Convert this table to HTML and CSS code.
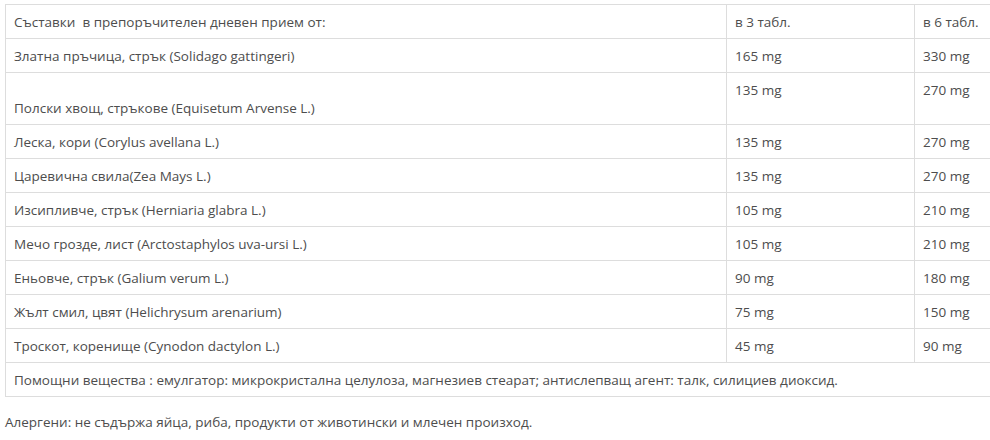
FILE: index.html
```html
<!DOCTYPE html>
<html lang="bg">
<head>
<meta charset="utf-8">
<title>Съставки</title>
<link rel="stylesheet" href="styles.css">
</head>
<body>
<div class="page">
  <table class="ingredients">
    <colgroup>
      <col class="c-name">
      <col class="c-dose">
      <col class="c-dose2">
    </colgroup>
    <tbody>
      <tr><td>Съставки&nbsp; в препоръчителен дневен прием от:</td><td>в 3 табл.</td><td>в 6 табл.</td></tr>
      <tr><td>Златна пръчица, стрък (Solidago gattingeri)</td><td>165 mg</td><td>330 mg</td></tr>
      <tr><td><span class="blank">&nbsp;</span>Полски хвощ, стръкове (Equisetum Arvense L.)</td><td>135 mg</td><td>270 mg</td></tr>
      <tr><td>Леска, кори (Corylus avellana L.)</td><td>135 mg</td><td>270 mg</td></tr>
      <tr><td>Царевична свила(Zea Mays L.)</td><td>135 mg</td><td>270 mg</td></tr>
      <tr><td>Изсипливче, стрък (Herniaria glabra L.)</td><td>105 mg</td><td>210 mg</td></tr>
      <tr><td>Мечо грозде, лист (Arctostaphylos uva-ursi L.)</td><td>105 mg</td><td>210 mg</td></tr>
      <tr><td>Еньовче, стрък (Galium verum L.)</td><td>90 mg</td><td>180 mg</td></tr>
      <tr><td>Жълт смил, цвят (Helichrysum arenarium)</td><td>75 mg</td><td>150 mg</td></tr>
      <tr><td>Троскот, коренище (Cynodon dactylon L.)</td><td>45 mg</td><td>90 mg</td></tr>
      <tr><td colspan="3">Помощни вещества : емулгатор: микрокристална целулоза, магнезиев стеарат; антислепващ агент: талк, силициев диоксид.</td></tr>
    </tbody>
  </table>
  <p class="note">Алергени: не съдържа яйца, риба, продукти от животински и млечен произход.</p>
</div>
</body>
</html>
```

FILE: styles.css
```css
html, body {
  margin: 0;
  padding: 0;
  background: #fff;
  overflow: hidden;
}

.page {
  padding: 4px 0 0 5px;
  font-family: "Open Sans", "Noto Sans", sans-serif;
  font-size: 13.5px;
  line-height: 18px;
  color: #4d4d4d;
}

.ingredients {
  border-collapse: collapse;
  table-layout: fixed;
  width: 988px;
}

.c-name { width: 721px; }
.c-dose { width: 188px; }
.c-dose2 { width: 79px; }

.ingredients td {
  border: 1px solid #ddd;
  padding: 7.5px 8px 7.5px 8px;
  vertical-align: top;
  text-align: left;
  white-space: nowrap;
}

.blank {
  display: block;
}

.note {
  margin: 16px 0 0 0;
}
```
